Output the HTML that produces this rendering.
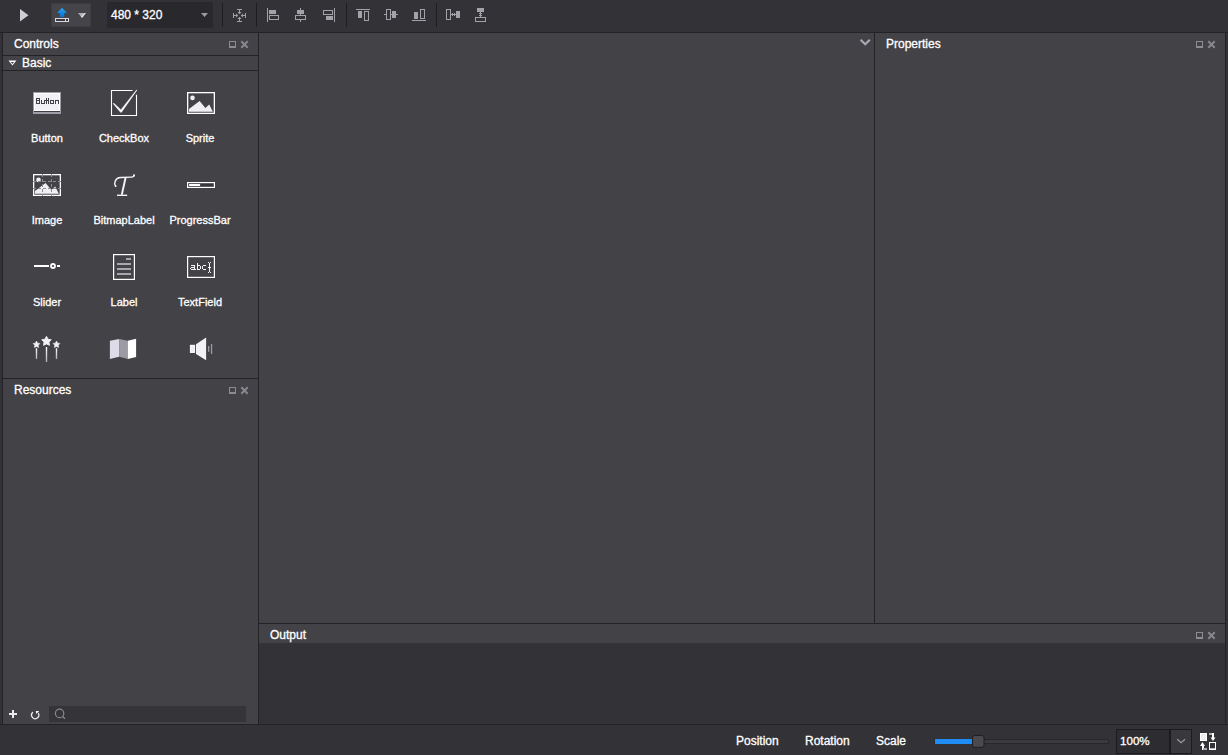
<!DOCTYPE html>
<html><head><meta charset="utf-8">
<style>
html,body{margin:0;padding:0;}
body{width:1228px;height:755px;overflow:hidden;position:relative;background:#333237;font-family:"Liberation Sans",sans-serif;color:#fff;}
.a{position:absolute;}
.line{position:absolute;background:#232226;}
.panel{position:absolute;background:#434247;}
.hdr{position:absolute;font-size:12px;line-height:14px;white-space:nowrap;-webkit-text-stroke:0.3px #fff;}
.lbl{position:absolute;font-size:11px;line-height:13px;white-space:nowrap;text-align:center;width:80px;-webkit-text-stroke:0.3px #fff;}
svg{position:absolute;overflow:visible;}
</style></head>
<body>
<!-- toolbar -->
<!-- toolbar svg -->
<svg style="left:0;top:0" width="500" height="32" viewBox="0 0 500 32">
<defs><linearGradient id="bl" x1="0" y1="0" x2="0" y2="1"><stop offset="0" stop-color="#27a6f5"/><stop offset="1" stop-color="#0a6fd1"/></linearGradient>
<linearGradient id="dd" x1="0" y1="0" x2="1" y2="0.6"><stop offset="0" stop-color="#a5a5ae"/><stop offset="0.55" stop-color="#b5b5bd"/><stop offset="0.75" stop-color="#f4f4f6"/><stop offset="1" stop-color="#ffffff"/></linearGradient></defs>
<polygon points="20,9 28.5,15.2 20,21.4" fill="#cecdd3"/>
<rect x="51" y="3" width="40" height="24" fill="#454449"/>
<rect x="51.5" y="3.5" width="39" height="23" fill="none" stroke="#3d3c41" stroke-width="1"/>
<polygon points="57,12.9 62,7.7 67,12.9 64.3,12.9 64.3,17.1 59.8,17.1 59.8,12.9" fill="url(#bl)"/>
<g shape-rendering="crispEdges">
<rect x="55" y="18" width="14" height="4" fill="#d9d8dd"/>
<rect x="56" y="19" width="9" height="2" fill="#3a393e"/>
<rect x="66" y="19" width="2" height="2" fill="#3a393e"/>
</g>
<polygon points="78,13 86,13 82,18" fill="url(#dd)"/>
<rect x="107" y="2" width="106" height="26" fill="#29282c"/>
<polygon points="201,13 208,13 204.5,17" fill="#9c9ba2"/>
<g fill="#1e1d21" shape-rendering="crispEdges">
<rect x="222" y="3" width="1" height="24"/><rect x="256" y="3" width="1" height="24"/>
<rect x="346" y="3" width="1" height="24"/><rect x="436" y="3" width="1" height="24"/>
</g>
<g fill="#a3a2a8" shape-rendering="crispEdges">
<!-- move -->
<rect x="237" y="9" width="5" height="1"/><rect x="239" y="10" width="1" height="2"/>
<rect x="237" y="21" width="5" height="1"/><rect x="239" y="19" width="1" height="2"/>
<rect x="233" y="13" width="1" height="5"/><rect x="234" y="15" width="2" height="1"/>
<rect x="245" y="13" width="1" height="5"/><rect x="243" y="15" width="2" height="1"/>
</g>
<g fill="#a3a2a8">
<polygon points="237.5,12 241.5,12 239.5,14.2"/>
<polygon points="237.5,19 241.5,19 239.5,16.8"/>
<polygon points="236,13.5 236,17.5 238.2,15.5"/>
<polygon points="243,13.5 243,17.5 240.8,15.5"/>
</g>
<g fill="#a3a2a8" shape-rendering="crispEdges">
<!-- align left -->
<rect x="267" y="8" width="1" height="14"/><rect x="269" y="10" width="7" height="4"/>
<path d="M269 15h10v5h-10z M270 16v3h8v-3z" fill-rule="evenodd"/>
<!-- align hcenter -->
<rect x="300" y="8" width="1" height="2"/><rect x="300" y="14" width="1" height="1"/><rect x="300" y="20" width="1" height="2"/>
<rect x="297" y="10" width="7" height="4"/>
<path d="M295 15h11v5h-11z M296 16v3h9v-3z" fill-rule="evenodd"/>
<!-- align right -->
<rect x="334" y="8" width="1" height="14"/><rect x="326" y="16" width="7" height="4"/>
<path d="M323 10h10v5h-10z M324 11v3h8v-3z" fill-rule="evenodd"/>
<!-- align top -->
<rect x="356" y="9" width="14" height="1"/><rect x="358" y="11" width="4" height="7"/>
<path d="M364 11h5v10h-5z M365 12v8h3v-8z" fill-rule="evenodd"/>
<!-- align vcenter -->
<rect x="384" y="14" width="2" height="1"/><rect x="391" y="14" width="1" height="1"/><rect x="396" y="14" width="2" height="1"/>
<rect x="392" y="11" width="4" height="7"/>
<path d="M386 9h5v11h-5z M387 10v9h3v-9z" fill-rule="evenodd"/>
<!-- align bottom -->
<rect x="412" y="20" width="14" height="1"/><rect x="414" y="12" width="4" height="7"/>
<path d="M420 9h5v10h-5z M421 10v8h3v-8z" fill-rule="evenodd"/>
<!-- distribute h -->
<path d="M446 9h5v11h-5z M447 10v9h3v-9z" fill-rule="evenodd"/>
<rect x="456" y="11" width="4" height="7"/>
<rect x="451" y="14" width="5" height="1"/>
<rect x="452" y="13" width="1" height="3"/><rect x="454" y="13" width="1" height="3"/>
<!-- distribute v -->
<rect x="477" y="8" width="7" height="4"/>
<path d="M475 17h11v5h-11z M476 18v3h9v-3z" fill-rule="evenodd"/>
<rect x="480" y="12" width="1" height="5"/>
<rect x="479" y="13" width="3" height="1"/><rect x="479" y="15" width="3" height="1"/>
</g>
</svg>
<div class="hdr" style="left:111px;top:8px;">480 * 320</div>

<div class="line" style="left:0;top:32px;width:1228px;height:1px;"></div>

<!-- left panel -->
<div class="panel" style="left:3px;top:33px;width:255px;height:691px;"></div>
<div class="line" style="left:2px;top:32px;width:1px;height:693px;"></div>
<div class="line" style="left:258px;top:32px;width:1px;height:693px;"></div>
<div class="line" style="left:2px;top:55px;width:256px;height:1px;"></div>
<div class="line" style="left:2px;top:70px;width:256px;height:1px;"></div>
<div class="line" style="left:2px;top:378px;width:256px;height:1px;"></div>
<div class="hdr" style="left:14px;top:37px;">Controls</div>
<div class="hdr" style="left:22px;top:56px;">Basic</div>
<div class="hdr" style="left:14px;top:383px;">Resources</div>
<div class="lbl" style="left:7px;top:132px;">Button</div>
<div class="lbl" style="left:84px;top:132px;">CheckBox</div>
<div class="lbl" style="left:160px;top:132px;">Sprite</div>
<div class="lbl" style="left:7px;top:214px;">Image</div>
<div class="lbl" style="left:84px;top:214px;">BitmapLabel</div>
<div class="lbl" style="left:160px;top:214px;">ProgressBar</div>
<div class="lbl" style="left:7px;top:296px;">Slider</div>
<div class="lbl" style="left:84px;top:296px;">Label</div>
<div class="lbl" style="left:160px;top:296px;">TextField</div>


<!-- left panel svg -->
<svg style="left:0;top:0" width="260" height="755" viewBox="0 0 260 755">
<g fill="#8d8c92" shape-rendering="crispEdges">
<path d="M229 41h7v7h-7z M230 42v4h5v-4z" fill-rule="evenodd"/>
<path d="M229 387h7v7h-7z M230 388v4h5v-4z" fill-rule="evenodd"/>
</g>
<g stroke="#89888e" stroke-width="2" stroke-linecap="butt">
<path d="M241.3,41.3 L247.7,47.7 M247.7,41.3 L241.3,47.7"/>
<path d="M241.3,387.3 L247.7,393.7 M247.7,387.3 L241.3,393.7"/>
</g>
<!-- basic triangle -->
<path d="M8.5,60.6 H16.4 L12.45,65.4 Z M10.9,62.1 L14,62.1 L12.45,63.9 Z" fill="#ffffff" fill-rule="evenodd"/>

<!-- Button icon -->
<g shape-rendering="crispEdges">
<rect x="33" y="92" width="28" height="22" fill="#9e9da5"/>
<rect x="34" y="93" width="26" height="18" fill="#ffffff"/>
<rect x="35" y="94" width="24" height="16" fill="#f1f0f4"/>
<rect x="34" y="111" width="26" height="1" fill="#3e3d42"/>
<g fill="#403f45">
<path d="M36 98h4v1h-4z M36 99h1v5h-1z M39 99h1v1h-1z M36 100h4v1h-4z M39 101h1v2h-1z M36 103h4v1h-4z"/>
<path d="M41 100h1v4h-1z M44 100h1v4h-1z M41 103h4v1h-4z"/>
<path d="M45.5 98h1v6h-1z M47.5 98h1v6h-1z M45 100h4v1h-4z"/>
<path d="M50 100h4v1h-4z M50 103h4v1h-4z M50 100h1v4h-1z M53 100h1v4h-1z"/>
<path d="M55 100h4v1h-4z M55 100h1v4h-1z M58 100h1v4h-1z"/>
</g>
</g>

<!-- CheckBox icon -->
<path d="M132.6,90.5 H111.5 V115.5 H136.5 V94.8" fill="none" stroke="#ffffff" stroke-width="1.1"/>
<polygon points="112.8,103.6 113.9,102.9 120.9,109.6 136.4,89.7 137.2,90.3 121.6,112.6 120.4,112.6" fill="#f4f3f7"/>

<!-- Sprite icon -->
<g id="spr">
<rect x="187.65" y="92.65" width="26.7" height="20.7" fill="none" stroke="#ffffff" stroke-width="1.3"/>
<circle cx="192.5" cy="97.9" r="2.3" fill="#f0eff4"/>
<polygon points="189,109 199.6,100.9 205.4,107.9 209.2,104.4 212.9,111.8 189,111.8" fill="#f0eff4"/>
</g>
<!-- Image icon -->
<g transform="translate(-154,82)">
<rect x="187.65" y="92.65" width="26.7" height="20.7" fill="none" stroke="#ffffff" stroke-width="1.3"/>
<circle cx="192.5" cy="97.9" r="2.3" fill="#f0eff4"/>
<polygon points="189,109 199.6,100.9 205.4,107.9 209.2,104.4 212.9,111.8 189,111.8" fill="#f0eff4"/>
</g>
<g stroke="#8e8d94" stroke-width="1" stroke-dasharray="3,2" fill="none">
<path d="M42.5,174 V196 M51.5,174 V196 M33,181.5 H61 M33,188.5 H61"/>
</g>

<!-- BitmapLabel T -->
<g fill="none" stroke="#f4f3f7" stroke-linecap="round">
<path d="M115.6,186.2 C113.6,183.2 115.2,177.8 120.5,177.5 L131.2,177.1 C133.6,177 134.6,175.6 134,174.9" stroke-width="1.4"/>
</g>
<circle cx="134" cy="175.5" r="0.9" fill="#f4f3f7"/>
<circle cx="115.6" cy="186" r="0.9" fill="#f4f3f7"/>
<polygon points="124.6,177.4 126.6,177.4 122.8,194.8 120.8,194.8" fill="#f4f3f7"/>
<rect x="117" y="194.6" width="10.2" height="1.4" fill="#f4f3f7"/>

<!-- ProgressBar -->
<rect x="187.6" y="182.6" width="26.8" height="4.8" fill="#38373c" stroke="#ffffff" stroke-width="1.2"/>
<rect x="189" y="184" width="11.1" height="2" rx="0.6" fill="#ffffff"/>

<!-- Slider -->
<g shape-rendering="crispEdges" fill="#ffffff">
<rect x="34" y="265" width="15" height="2"/>
<rect x="57" y="265" width="3" height="2"/>
</g>
<circle cx="53" cy="266" r="2" fill="none" stroke="#ffffff" stroke-width="1.8"/>

<!-- Label icon -->
<rect x="113.6" y="254.6" width="20.8" height="24.8" fill="none" stroke="#ffffff" stroke-width="1.2"/>
<g fill="#a8a7b0" shape-rendering="crispEdges">
<rect x="126" y="258" width="5" height="2"/>
<rect x="117" y="263" width="14" height="2"/>
<rect x="117" y="268" width="14" height="2"/>
<rect x="117" y="273" width="14" height="2"/>
</g>

<!-- TextField icon -->
<rect x="187.6" y="256.6" width="26.8" height="20.8" fill="none" stroke="#ffffff" stroke-width="1.2"/>
<g fill="#f4f3f7" shape-rendering="crispEdges">
<path d="M191 265h4v1h-4z M194 266h1v4h-1z M191 267h3v1h-3z M190 268h1v1h-1z M191 269h3v1h-3z M195 269h1v1h-1z"/>
<path d="M197 263h1v7h-1z M198 265h2v1h-2z M200 266h1v3h-1z M198 269h2v1h-2z"/>
<path d="M203 265h3v1h-3z M202 266h1v3h-1z M203 269h3v1h-3z"/>
<path d="M209 263h1v9h-1z M208 262h1v1h-1z M210 262h1v1h-1z M208 272h1v1h-1z M210 272h1v1h-1z M208 267h3v1h-3z"/>
</g>

<!-- Particle -->
<g fill="#f2f1f6" stroke="#f2f1f6" stroke-width="0.9" stroke-linejoin="round">
<polygon id="st" points="0.00,-5.00 1.53,-2.10 4.76,-1.55 2.47,0.80 2.94,4.05 0.00,2.60 -2.94,4.05 -2.47,0.80 -4.76,-1.55 -1.53,-2.10" transform="translate(46.5,341.3)"/>
<polygon points="0.00,-5.00 1.53,-2.10 4.76,-1.55 2.47,0.80 2.94,4.05 0.00,2.60 -2.94,4.05 -2.47,0.80 -4.76,-1.55 -1.53,-2.10" transform="translate(36.5,344.6) scale(0.7)"/>
<polygon points="0.00,-5.00 1.53,-2.10 4.76,-1.55 2.47,0.80 2.94,4.05 0.00,2.60 -2.94,4.05 -2.47,0.80 -4.76,-1.55 -1.53,-2.10" transform="translate(56.5,344.6) scale(0.7)"/>
</g>
<defs><linearGradient id="stem" x1="0" y1="0" x2="0" y2="1"><stop offset="0" stop-color="#ffffff"/><stop offset="1" stop-color="#b0afb6"/></linearGradient></defs>
<rect x="35.8" y="348.3" width="1.4" height="10.7" fill="url(#stem)"/>
<rect x="45.8" y="347" width="1.4" height="15" fill="url(#stem)"/>
<rect x="55.8" y="348.3" width="1.4" height="10.7" fill="url(#stem)"/>

<!-- Map -->
<polygon points="109.9,340.8 119.1,339 119.1,356.8 109.9,359" fill="#dcdbe7"/>
<polygon points="119.1,339 127.8,340.8 127.8,359 119.1,356.8" fill="#9c9ba4"/>
<polygon points="127.8,340.8 136.1,338.8 136.1,357 127.8,359" fill="#ffffff"/>

<!-- Audio -->
<rect x="190.4" y="345.3" width="4.2" height="7.1" fill="#f0eff5" stroke="#ffffff" stroke-width="1"/>
<polygon points="196,344.2 206.1,337.6 206.1,360.2 196,354" fill="#f2f1f6"/>
<rect x="208" y="346" width="1.3" height="5.8" fill="#9a99a2"/>
<rect x="210.9" y="343.9" width="1.3" height="10.1" fill="#9a99a2"/>

<!-- bottom bar -->
<g fill="#ebeaee" shape-rendering="crispEdges">
<rect x="9" y="713" width="8" height="2"/>
<rect x="12" y="710" width="2" height="8"/>
</g>
<path d="M32.5,712.5 A3.65,3.65 0 1 0 38.4,713.3" fill="none" stroke="#ebeaee" stroke-width="1.25" stroke-linecap="round"/>
<polygon points="35.9,711.1 39.2,711.1 36.2,714.1" fill="#ffffff"/>
<rect x="49" y="706" width="197" height="16" fill="#353439"/>
<circle cx="59.6" cy="713.4" r="4.2" fill="none" stroke="#89888e" stroke-width="1.2"/>
<path d="M62.6,716.4 L65,718.8" stroke="#89888e" stroke-width="1.4"/>
</svg>

<!-- canvas -->
<div class="panel" style="left:259px;top:33px;width:615px;height:590px;"></div>
<div class="line" style="left:874px;top:32px;width:1px;height:591px;"></div>
<!-- properties -->
<div class="panel" style="left:875px;top:33px;width:350px;height:590px;"></div>
<div class="line" style="left:1225px;top:32px;width:1px;height:693px;"></div>
<div class="hdr" style="left:886px;top:37px;">Properties</div>
<!-- output -->
<div class="line" style="left:258px;top:623px;width:968px;height:1px;"></div>
<div class="panel" style="left:259px;top:624px;width:966px;height:19px;"></div>
<div class="hdr" style="left:270px;top:628px;">Output</div>
<!-- status -->
<div class="line" style="left:0;top:724px;width:1228px;height:1px;"></div>
<div class="hdr" style="left:736px;top:734px;">Position</div>
<div class="hdr" style="left:805px;top:734px;">Rotation</div>
<div class="hdr" style="left:876px;top:734px;">Scale</div>
<!-- right svg -->
<svg style="left:0;top:0" width="1228" height="755" viewBox="0 0 1228 755">
<path d="M860.6,39.7 L865.2,44.3 L869.8,39.7" fill="none" stroke="#a8a9b3" stroke-width="2.1"/>
<g fill="#8d8c92" shape-rendering="crispEdges">
<path d="M1196 41h7v7h-7z M1197 42v4h5v-4z" fill-rule="evenodd"/>
<path d="M1196 632h7v7h-7z M1197 633v4h5v-4z" fill-rule="evenodd"/>
</g>
<g stroke="#89888e" stroke-width="2" stroke-linecap="butt">
<path d="M1208.3,41.3 L1214.7,47.7 M1214.7,41.3 L1208.3,47.7"/>
<path d="M1208.3,632.3 L1214.7,638.7 M1214.7,632.3 L1208.3,638.7"/>
</g>
<!-- slider -->
<rect x="934.5" y="739.5" width="174" height="4" fill="#3b3a3f" stroke="#27262a" stroke-width="1"/>
<rect x="935" y="739" width="38" height="5" fill="#1f8cf4"/>
<rect x="972.5" y="735.5" width="11.5" height="11.8" rx="2.2" fill="#4a494e" stroke="#1f1e22" stroke-width="1"/>
<!-- combo -->
<rect x="1116.5" y="729.5" width="75" height="24" fill="#2d2c31" stroke="#1c1b1f" stroke-width="1"/>
<rect x="1171" y="730" width="20" height="23" fill="#39383d"/>
<rect x="1169" y="730" width="2" height="23" fill="#1c1b1f"/>
<path d="M1177.2,739.2 L1181.1,742.6 L1185,739.2" fill="none" stroke="#9c9ba2" stroke-width="1.2"/>
<!-- swap icon -->
<g shape-rendering="crispEdges">
<rect x="1200" y="733" width="7" height="8" fill="#ffffff"/>
<rect x="1201" y="734" width="5" height="6" fill="#eeeeee"/>
<path d="M1209 742h7v8h-7z M1210 743v5h5v-5z" fill="#ffffff" fill-rule="evenodd"/>
<rect x="1210" y="748" width="5" height="1" fill="#bdbdbd"/>
<rect x="1209" y="733" width="4" height="2" fill="#aaaaaa"/>
<rect x="1212" y="733" width="2" height="5" fill="#ffffff"/>
<rect x="1202" y="745" width="2" height="5" fill="#ffffff"/>
<rect x="1203" y="748" width="4" height="2" fill="#aaaaaa"/>
</g>
<polygon points="1210.5,737.5 1215.5,737.5 1213,741" fill="#ffffff"/>
<polygon points="1200,746 1205,746 1202.5,742" fill="#ffffff"/>
</svg>
<div class="hdr" style="left:1120px;top:734px;font-size:11.6px;">100%</div>
</body></html>
